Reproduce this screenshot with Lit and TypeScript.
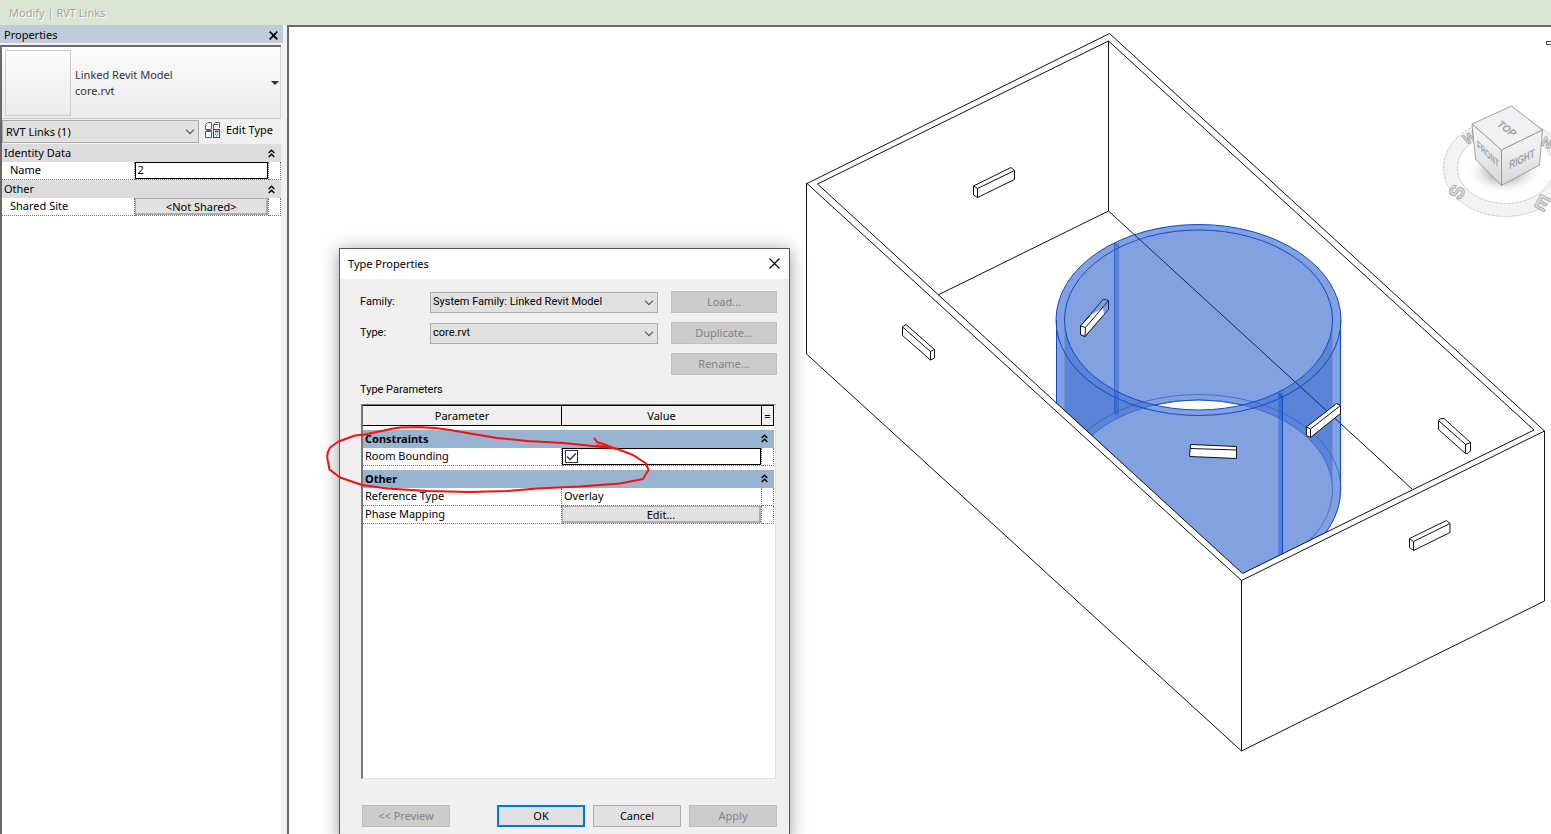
import { LitElement, html, svg, css } from "lit";
import { customElement, state } from "lit/decorators.js";

const collapse = html`<svg class="collapse" width="7" height="9" viewBox="0 0 7 9" aria-hidden="true">
  <path d="M.7 4 3.5 1.2 6.3 4M.7 8 3.5 5.2 6.3 8" fill="none" stroke="#000" stroke-width="1.4" />
</svg>`;

interface Block {
  outline: string;
  edges: string;
}

const blocks: Block[] = [
  {
    outline: "M973.5 186 1011 167.5 1014.5 170.5V179.5L977.5 197.5 973.5 195Z",
    edges: "M973.5 186 977.5 188.5 1014.5 170.5M977.5 188.5V197.5",
  },
  {
    outline: "M902.5 327 906 324.5 934.5 349.5V358L930.5 360 902.5 335.5Z",
    edges: "M902.5 327 930.5 351.5 934.5 349.5M930.5 351.5V360",
  },
  {
    outline: "M1438.5 420.5 1441 418.5H1444L1470.5 442.5V451L1467.5 453.5H1465.5L1438.5 429.5Z",
    edges: "M1438.5 420.5 1465.5 444.5 1470.5 442.5M1465.5 444.5V453.5",
  },
  {
    outline: "M1409.5 538.5 1446.5 520.5 1450 523.5V532.5L1413.5 550.5 1409.5 547.5Z",
    edges: "M1409.5 538.5 1413.5 541.5 1450 523.5M1413.5 541.5V550.5",
  },
  {
    outline: "M1190.5 444.5 1236.5 446.5V458.5L1189.5 456.5Z",
    edges: "M1190.5 448.5 1236.5 450",
  },
  {
    outline: "M1306.5 427 1336.5 403.5 1340.5 405.5V413.5L1310.5 437.5 1306.5 435.5Z",
    edges: "M1306.5 427 1310.5 429 1340.5 405.5M1310.5 429V437.5",
  },
];

@customElement("model-view")
export class ModelView extends LitElement {
  static styles = css`
    :host {
      display: block;
      overflow: hidden;
      background: #fff;
    }
    .scene {
      display: block;
      width: 100%;
      height: 100%;
    }
    .edge {
      fill: none;
      stroke: #111;
      stroke-width: 1;
    }
    .block {
      fill: #fff;
      stroke: #111;
      stroke-width: 1;
    }
    .glass {
      fill: #0040c0;
      fill-opacity: 0.49;
    }
    .seam,
    .inside {
      fill: #0040c0;
      fill-opacity: 0.3;
    }
    .blue {
      fill: none;
      stroke: #1048cc;
      stroke-width: 1;
    }
    .faint {
      fill: none;
      stroke: #2c5cc8;
      stroke-opacity: 0.7;
      stroke-width: 1;
    }
    .face-label {
      font: bold 12px "Liberation Sans", Arial, sans-serif;
      fill: #a0a3a7;
      text-anchor: middle;
    }
    .compass {
      font: bold 20px "Liberation Sans", Arial, sans-serif;
      fill: #e4e4e4;
      stroke: #a2a2a2;
      stroke-width: 0.8;
      text-anchor: middle;
    }
    .far {
      font-size: 14px;
    }
  `;

  render() {
    return html`<svg class="scene" viewBox="289 27 1262 807" preserveAspectRatio="xMaxYMin slice" role="img" aria-label="3D model view">
      <defs>
        <clipPath id="room"><path d="M817 184 1108.5 41 1534 430 1242.5 573.5Z" /></clipPath>
        <linearGradient id="front" x1="0" y1="0" x2="0" y2="1">
          <stop offset="0.3" stop-color="#f1f1f1" /><stop offset="1" stop-color="#d6d6d6" />
        </linearGradient>
        <radialGradient id="shade">
          <stop offset="0.4" stop-color="#c4c4c4" /><stop offset="1" stop-color="#fff" stop-opacity="0" />
        </radialGradient>
      </defs>

      <path class="edge" d="M1108.5 41V211L938 295M1108.5 211 1412 489" />
      <path class="block" d="M1080.5 326 1103.5 299 1108.5 300.5V309.5L1085 336.5 1080.5 334.5Z" />
      <path class="edge" d="M1080.5 326 1085.5 327.5 1108.5 300.5M1085.5 327.5 1085 336.5" />

      <g clip-path="url(#room)">
        <path class="glass" d="M1154.5 405A134 90 0 1 1 1242.5 405A134 90 0 0 0 1154.5 405Z" />
        <path
          class="inside"
          d="M1064.5 320V490A134 90 0 0 1 1154.5 405A134 90 0 0 1 1064.5 320ZM1332.5 320V490A134 90 0 0 0 1242.5 405A134 90 0 0 0 1332.5 320Z"
        />
        <path
          class="glass"
          fill-rule="evenodd"
          d="M1056 320A142.5 95.5 0 0 1 1341 320V490A142.5 95.5 0 0 1 1056 490ZM1064.5 320A134 90 0 0 0 1332.5 320A134 90 0 0 0 1064.5 320Z"
        />
        <rect class="seam" x="1114" y="243" width="5" height="171" />
        <rect class="seam" x="1278" y="393" width="5" height="180" />
        <ellipse class="blue" cx="1198.5" cy="320" rx="142.5" ry="95.5" />
        <ellipse class="blue" cx="1198.5" cy="320" rx="134" ry="90" />
        <path
          class="blue"
          d="M1056.5 320V490M1340.5 320V490A142 95.5 0 0 1 1300 557M1282.5 396V573M1278 393 1282.5 397M1154.5 405A134 90 0 0 1 1242.5 405"
        />
        <path
          class="faint"
          d="M1056 490A142.5 95.5 0 0 1 1341 490M1064.5 490A134 90 0 0 1 1332.5 490A134 90 0 0 1 1198.5 580M1114.5 243V413L1119 417M1114 243 1119 247"
        />
      </g>

      <path d="M1080.5 326 1090 315.5 1103 308 1104 315 1085 336.5 1080.5 334.5Z" fill="#fff" />
      <path class="edge" d="M1090 315.5 1080.5 326V334.5L1085 336.5 1104 314.5M1080.5 326 1085.5 327.5 1103 307M1085.5 327.5 1085 336.5" />

      <path class="edge" d="M807 183.5 1109.5 33.5 1544.5 431 1241.5 580.5Z" />
      <path class="edge" d="M817.5 184 1108.5 41 1534 430 1242.5 573.5Z" />
      <path class="edge" d="M806.5 183V354L1241.5 751 1544.5 601V431M1241.5 580.5V751" />
      ${blocks.map((b) => svg`<path class="block" d=${b.outline} /><path class="edge" d=${b.edges} />`)}

      <g>
        <path
          fill="#f3f3f3"
          fill-rule="evenodd"
          stroke="#bdbdbd"
          stroke-dasharray="3 1"
          stroke-width="0.8"
          d="M1443.5 168A62 48.5 0 0 1 1567.5 168A62 48.5 0 0 1 1443.5 168ZM1457.5 168A48 35.5 0 0 1 1553.5 168A48 35.5 0 0 1 1457.5 168Z"
        />
        <ellipse cx="1504" cy="171" rx="38" ry="24" fill="url(#shade)" />
        <text class="compass" transform="translate(1463 195) rotate(-62)">S</text>
        <text class="compass" transform="translate(1539 209) rotate(28)">E</text>
        <text class="compass far" transform="translate(1545 147) rotate(25)">N</text>
        <text class="compass far" transform="translate(1472 142) rotate(-25)">W</text>
        <path d="M1472 124 1511.5 106 1542.5 130 1501.5 150Z" fill="#f0f1f2" stroke="#8c8c8c" stroke-width="0.8" />
        <path d="M1472 124 1501.5 150V185.5L1475.5 159Z" fill="url(#front)" stroke="#8c8c8c" stroke-width="0.8" />
        <path d="M1501.5 150 1542.5 130 1539.5 165 1501.5 185.5Z" fill="url(#front)" stroke="#8c8c8c" stroke-width="0.8" />
        <text class="face-label" transform="matrix(0.65 0.5 -0.7 0.55 1504 131)">TOP</text>
        <text class="face-label" transform="matrix(0.52 0.5 0.05 0.95 1488 158)">FRONT</text>
        <text class="face-label" transform="matrix(0.68 -0.33 0 1 1522 163)">RIGHT</text>
      </g>
      <path d="M1552 41.5H1546.5V44.5H1552" fill="none" stroke="#444" />
    </svg>`;
  }
}

@customElement("properties-panel")
export class PropertiesPanel extends LitElement {
  static styles = css`
    :host {
      display: flex;
      flex-direction: column;
      color: #000;
      font: 11px/16px "Noto Sans", sans-serif;
    }
    button,
    input,
    select {
      font: inherit;
      color: inherit;
      margin: 0;
      border-radius: 0;
    }
    .title {
      box-sizing: border-box;
      display: flex;
      align-items: center;
      justify-content: space-between;
      height: 18px;
      margin: 0 0 2px;
      padding: 2px 5px 0 4px;
      background: #bfcddb;
      font-size: 11px;
      font-weight: 400;
    }
    .close {
      display: flex;
      border: 0;
      padding: 0;
      background: none;
    }
    .body {
      flex: 1;
      margin-right: 2px;
      border-left: 2px solid #696969;
      border-top: 2px solid #696969;
      background: #fff;
    }
    .type {
      display: flex;
      align-items: center;
      gap: 4px;
      box-sizing: border-box;
      width: 100%;
      height: 72px;
      padding: 1px 1px 0 3px;
      border: 0;
      border-bottom: 1px solid #c8c8c8;
      border-right: 1px solid #d0d0d0;
      background: linear-gradient(#fdfdfd, #ebebeb);
      text-align: left;
      color: #333;
    }
    .thumb {
      width: 64px;
      height: 64px;
      border: 1px solid #ccc;
    }
    .names {
      flex: 1;
    }
    .filter {
      display: flex;
      gap: 5px;
      padding: 1px 8px 1px 0;
      background: #f0f0f0;
    }
    .pick {
      position: relative;
      flex: 1;
      display: flex;
    }
    .pick select {
      appearance: none;
      width: 100%;
      height: 23px;
      padding: 0 20px 0 3px;
      border: 1px solid #adadad;
      background: #e1e1e1;
    }
    .pick svg {
      position: absolute;
      right: 4px;
      top: 9px;
      pointer-events: none;
    }
    .edit {
      display: flex;
      align-items: center;
      gap: 5px;
      height: 20px;
      border: 0;
      padding: 0;
      background: none;
    }
    table {
      width: 100%;
      border-collapse: separate;
      border-spacing: 0;
      table-layout: fixed;
    }
    .c-action {
      width: 12px;
    }
    th,
    td {
      box-sizing: border-box;
      height: 18px;
      padding: 0;
      font-weight: 400;
      text-align: left;
    }
    .group th {
      background: #dcdcdc;
      padding: 0 6px 0 2px;
    }
    .group div {
      display: flex;
      align-items: center;
      justify-content: space-between;
    }
    .row th,
    .row td {
      border-right: 1px dotted #777;
      border-bottom: 1px dotted #777;
    }
    .row th {
      padding: 0 0 2px 8px;
      line-height: 15px;
    }
    .row input,
    .row button {
      display: block;
      box-sizing: border-box;
      width: 100%;
      height: 17px;
      line-height: 13px;
    }
    .row input {
      border: 1px solid #000;
      padding: 0 1px 2px;
      outline: 0;
    }
    .row button {
      border: 1px solid #adadad;
      border-width: 1px 2px 2px 1px;
      padding: 0;
      background: #e1e1e1;
    }
  `;

  @state() private name = "2";

  render() {
    return html`
      <h2 class="title">
        Properties
        <button class="close" aria-label="Close properties">
          <svg width="9" height="9" viewBox="0 0 9 9"><path d="M.7.7 8.3 8.3M8.3.7.7 8.3" stroke="#000" stroke-width="1.7" /></svg>
        </button>
      </h2>
      <div class="body">
        <button class="type">
          <span class="thumb"></span>
          <span class="names">Linked Revit Model<br />core.rvt</span>
          <svg width="8" height="4" viewBox="0 0 8 4" aria-hidden="true"><path d="M0 0H8L4 4Z" fill="#333" /></svg>
        </button>
        <div class="filter">
          <span class="pick">
            <select aria-label="Selection filter"><option>RVT Links (1)</option></select>
            <svg width="10" height="6" viewBox="0 0 10 6" aria-hidden="true"><path d="M1 .7 5 4.7 9 .7" fill="none" stroke="#555" stroke-width="1.1" /></svg>
          </span>
          <button class="edit">
            <svg width="17" height="17" viewBox="0 0 17 17" aria-hidden="true">
              <path
                d="M1.5 2.5 3.5.5H7.5V6.5L6 7.5H1.5ZM9.5 2.5 11.5.5H15.5V6M9.5 2.5V7.5M9.5 2.5H14M1.5 9.5H7.5V15.5H1.5ZM1.5 9.5 3 8.500H8"
                fill="#f7f7f7"
                stroke="#555c66"
              />
              <rect x="9.5" y="7.5" width="6" height="8" fill="#fff" stroke="#3b4a63" />
              <path d="M11 9.5H14.500" stroke="#1464c8" stroke-width="2" />
              <path d="M11 12.5H12M13 12.5H14M12 14H13" stroke="#1464c8" />
            </svg>
            Edit Type
          </button>
        </div>
        <table aria-label="Instance properties">
          <colgroup><col /><col /><col class="c-action" /></colgroup>
          <tr class="group"><th colspan="3"><div>Identity Data ${collapse}</div></th></tr>
          <tr class="row">
            <th id="p-name">Name</th>
            <td><input aria-labelledby="p-name" .value=${this.name} @input=${(e: Event) => (this.name = (e.target as HTMLInputElement).value)} /></td>
            <td></td>
          </tr>
          <tr class="group"><th colspan="3"><div>Other ${collapse}</div></th></tr>
          <tr class="row">
            <th>Shared Site</th>
            <td><button>&lt;Not Shared&gt;</button></td>
            <td></td>
          </tr>
        </table>
      </div>
    `;
  }
}

@customElement("type-dialog")
export class TypeDialog extends LitElement {
  static styles = css`
    :host {
      display: block;
      box-sizing: border-box;
      border: 1px solid #555;
      background: #f0f0f0;
      box-shadow: 0 2px 16px rgba(0, 0, 0, 0.4);
      color: #000;
      font: 11px/16px "Noto Sans", sans-serif;
    }
    button,
    input,
    select {
      box-sizing: border-box;
      margin: 0;
      border-radius: 0;
      font: inherit;
      color: inherit;
    }
    .bar {
      display: flex;
      align-items: center;
      justify-content: space-between;
      height: 30px;
      padding: 0 9px 0 8px;
      background: #fff;
    }
    .bar h2 {
      margin: 0;
      font-size: 11px;
      font-weight: 400;
    }
    .bar button {
      display: flex;
      border: 0;
      padding: 0 0 2px;
      background: none;
    }
    .content {
      padding: 12px 12px 12px 20px;
    }
    .form {
      display: grid;
      grid-template-columns: 70px 1fr 106px;
      grid-auto-rows: 22px;
      row-gap: 9px;
      align-items: center;
    }
    .form label,
    .pick,
    .caption {
      font-family: Roboto, sans-serif;
    }
    .pick {
      position: relative;
      display: flex;
      margin-right: 13px;
    }
    .pick select {
      appearance: none;
      width: 100%;
      height: 21px;
      padding: 0 20px 0 2px;
      border: 1px solid #adadad;
      background: #e1e1e1;
    }
    .pick svg {
      position: absolute;
      right: 4px;
      top: 8px;
      pointer-events: none;
    }
    .btn {
      height: 22px;
      padding: 0;
      border: 1px solid #adadad;
      background: #e1e1e1;
    }
    .btn:disabled {
      border-color: #bfbfbf;
      background: #ccc;
      color: #838383;
    }
    .primary {
      border: 2px solid #0078d7;
    }
    .wide {
      grid-column: 3;
    }
    .caption {
      margin: 7px 0 6px;
    }
    .sheet {
      box-sizing: border-box;
      height: 375px;
      margin: 0 1px;
      border: 1px solid #e3e3e3;
      border-left: 2px solid #777;
      border-top: 1px solid #777;
      background: #fff;
    }
    table {
      width: calc(100% - 1px);
      border-collapse: separate;
      border-spacing: 0;
      table-layout: fixed;
    }
    .c-param {
      width: 199px;
    }
    .c-flag {
      width: 12px;
    }
    th,
    td {
      box-sizing: border-box;
      height: 18px;
      padding: 0;
      font-weight: 400;
      line-height: 15px;
      text-align: left;
      white-space: nowrap;
    }
    .head th {
      height: 21px;
      padding-bottom: 1px;
      border-right: 1px solid #000;
      border-bottom: 1px solid #000;
      border-top: 1px solid #000;
      background: #f0f0f0;
      text-align: center;
    }
    .group th {
      height: 22px;
      padding: 0 6px 2px 2px;
      border-top: 4px solid #fff;
      background: #99b4d1;
      background-clip: padding-box;
      font-weight: 700;
    }
    .group div {
      display: flex;
      align-items: center;
      justify-content: space-between;
    }
    .row th,
    .row td {
      padding: 0 0 2px 2px;
      border-right: 1px dotted #777;
      border-bottom: 1px dotted #777;
    }
    .row .field {
      padding: 0;
    }
    .check {
      display: flex;
      align-items: center;
      box-sizing: border-box;
      height: 17px;
      padding-left: 2px;
      border: 1px solid #000;
    }
    .check input {
      appearance: none;
      width: 13px;
      height: 13px;
      border: 1px solid #333;
      background: #fff;
    }
    .check svg {
      margin-left: -12px;
      pointer-events: none;
    }
    .cell-btn {
      display: block;
      width: 100%;
      height: 17px;
      padding: 0;
      border: 1px solid #adadad;
      border-width: 1px 2px 2px 1px;
      background: #e1e1e1;
      line-height: 13px;
    }
    .actions {
      display: flex;
      gap: 8px;
      margin: 26px 0 0 2px;
    }
    .actions .btn {
      width: 88px;
    }
    .actions .first {
      margin-right: auto;
    }
  `;

  @state() private bounding = true;

  private select(id: string, value: string) {
    return html`<span class="pick">
      <select id=${id}><option>${value}</option></select>
      <svg width="10" height="6" viewBox="0 0 10 6" aria-hidden="true"><path d="M1 .7 5 4.7 9 .7" fill="none" stroke="#555" stroke-width="1.1" /></svg>
    </span>`;
  }

  render() {
    return html`
      <div class="bar">
        <h2>Type Properties</h2>
        <button aria-label="Close">
          <svg width="11" height="11" viewBox="0 0 11 11"><path d="M.5.5 10.5 10.5M10.5.5.5 10.5" stroke="#000" stroke-width="1.1" /></svg>
        </button>
      </div>
      <div class="content">
        <div class="form">
          <label for="family">Family:</label>
          ${this.select("family", "System Family: Linked Revit Model")}
          <button class="btn wide" disabled>Load...</button>
          <label for="type">Type:</label>
          ${this.select("type", "core.rvt")}
          <button class="btn wide" disabled>Duplicate...</button>
          <button class="btn wide" disabled>Rename...</button>
        </div>
        <div class="caption" id="caption">Type Parameters</div>
        <div class="sheet">
          <table aria-labelledby="caption">
            <colgroup><col class="c-param" /><col /><col class="c-flag" /></colgroup>
            <tr class="head"><th>Parameter</th><th>Value</th><th>=</th></tr>
            <tr class="group"><th colspan="3"><div>Constraints ${collapse}</div></th></tr>
            <tr class="row">
              <th><label for="bounding">Room Bounding</label></th>
              <td class="field">
                <div class="check">
                  <input id="bounding" type="checkbox" .checked=${this.bounding} @change=${(e: Event) => (this.bounding = (e.target as HTMLInputElement).checked)} />
                  ${this.bounding
                    ? html`<svg width="11" height="11" viewBox="0 0 11 11" aria-hidden="true"><path d="M1 5.5 4 8.5 10 2.5" fill="none" stroke="#333" stroke-width="1.3" /></svg>`
                    : ""}
                </div>
              </td>
              <td></td>
            </tr>
            <tr class="group"><th colspan="3"><div>Other ${collapse}</div></th></tr>
            <tr class="row"><th>Reference Type</th><td>Overlay</td><td></td></tr>
            <tr class="row"><th>Phase Mapping</th><td class="field"><button class="cell-btn">Edit...</button></td><td></td></tr>
          </table>
        </div>
        <div class="actions">
          <button class="btn first" disabled>&lt;&lt; Preview</button>
          <button class="btn primary">OK</button>
          <button class="btn">Cancel</button>
          <button class="btn" disabled>Apply</button>
        </div>
      </div>
    `;
  }
}

@customElement("app-root")
export class AppRoot extends LitElement {
  static styles = css`
    :host {
      display: flex;
      flex-direction: column;
      height: 100vh;
      overflow: hidden;
      background: #f0f0f0;
    }
    .ribbon {
      box-sizing: border-box;
      height: 25px;
      padding: 5px 9px 0;
      background: #d9e4d1;
      color: #a2a8a0;
      font: 11px/16px "Noto Sans", sans-serif;
      text-shadow: 1px 1px 0 #fff;
    }
    .main {
      flex: 1;
      min-height: 0;
      display: grid;
      grid-template-columns: 283px 1fr;
      column-gap: 4px;
    }
    .view {
      position: relative;
      min-width: 0;
      border-left: 2px solid #696969;
      border-top: 2px solid #696969;
    }
    model-view {
      height: 100%;
    }
    type-dialog {
      position: absolute;
      left: 50px;
      top: 221px;
      width: 451px;
    }
    .markup {
      position: absolute;
      left: 36px;
      top: 398px;
      pointer-events: none;
    }
  `;

  render() {
    return html`
      <header class="ribbon">Modify | RVT Links</header>
      <main class="main">
        <properties-panel></properties-panel>
        <section class="view">
          <model-view></model-view>
          <type-dialog role="dialog" aria-label="Type Properties"></type-dialog>
          <svg class="markup" width="328" height="70" viewBox="325 425 328 70" aria-hidden="true">
            <path
              d="M594.5 438.5 597 442 603 444 616 449M612 448 583 445 563 443 527 441 497 438 467 433 450 430Q436 427.5 420 427.3 400 427 393 428.5L365 434.5 355 435.5 338.5 441.5 330 447.5Q326.5 453 327.5 459L329.5 469.5 340 477.5 362 485 387 488.5 427 491 470 492 507 491 537 488.5 580 486.5 620 483.5 643 479 648.5 470 646 463.5 633 455 616 448.5 597 445.5"
              fill="none"
              stroke="#f8100c"
              stroke-width="2"
              stroke-linecap="round"
              stroke-linejoin="round"
            />
          </svg>
        </section>
      </main>
    `;
  }
}
